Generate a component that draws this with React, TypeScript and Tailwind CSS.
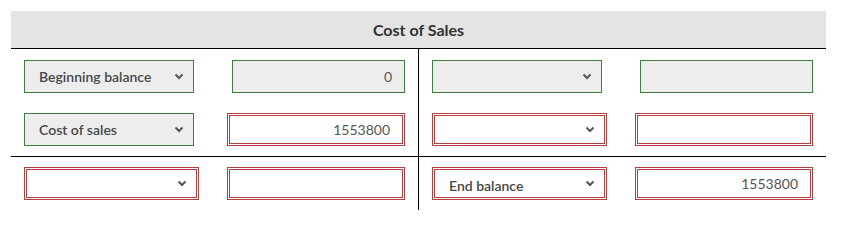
import React from 'react';

type Tone = 'ok' | 'bad';

interface CellProps {
  tone: Tone;
  value?: string;
  low?: boolean;
}

const Chevron = () => (
  <svg width="10" height="7" viewBox="0 0 10 7" className="shrink-0">
    <path d="M1.5 1.5 L5 5 L8.5 1.5" fill="none" stroke="#555" strokeWidth="2" />
  </svg>
);

// red boxes are drawn as two thin frames with a white gap between
const Frame: React.FC<{ tone: Tone; width: string; children: React.ReactNode }> = ({ tone, width, children }) => {
  if (tone === 'ok') {
    return <div className={`h-[33px] ${width} border border-[#3d7f3a] bg-[#ededed] flex`}>{children}</div>;
  }
  return (
    <div className={`h-[33px] ${width} border border-[#b3403d] bg-white p-px flex`}>
      <div className="flex-1 border border-[#b3403d] flex">{children}</div>
    </div>
  );
};

// dropdown account cell
const SelectCell: React.FC<CellProps> = ({ tone, value, low }) => (
  <Frame tone={tone} width={tone === 'ok' ? 'w-[170px]' : 'w-[175px]'}>
    <div className="flex-1 flex items-center justify-between pl-[14px] pr-[9px]">
      <span className={`text-[14px] font-semibold text-[#474747] ${low ? 'pt-[4px]' : ''}`}>{value ?? ''}</span>
      <Chevron />
    </div>
  </Frame>
);

// amount cell
const InputCell: React.FC<CellProps> = ({ tone, value }) => (
  <Frame tone={tone} width={tone === 'ok' ? 'w-[173px]' : 'w-[178px]'}>
    <div className="flex-1 flex items-center justify-end pr-[12px]">
      <span className="text-[14px] text-[#555]">{value ?? ''}</span>
    </div>
  </Frame>
);

const Side: React.FC<{ children: React.ReactNode }> = ({ children }) => (
  <div className="w-[407px] flex items-center justify-between px-[13px]">{children}</div>
);

export default function App() {
  return (
    <div className="w-[862px] h-[242px] bg-white pt-[11px] pl-[11px]" style={{ fontFamily: 'Lato, "Open Sans", sans-serif' }}>
      <div className="w-[815px]">
        <div className="h-[38px] bg-[#e4e4e4] border-b border-black flex items-center justify-center">
          <span className="text-[16px] font-bold text-[#333]">Cost of Sales</span>
        </div>

        <div className="flex">
          <div className="border-r border-black pt-[11px] pb-[10px] flex flex-col gap-[20px]">
            <Side>
              <SelectCell tone="ok" value="Beginning balance" />
              <InputCell tone="ok" value="0" />
            </Side>
            <Side>
              <SelectCell tone="ok" value="Cost of sales" />
              <InputCell tone="bad" value="1553800" />
            </Side>
          </div>
          <div className="pt-[11px] pb-[10px] flex flex-col gap-[20px]">
            <Side>
              <SelectCell tone="ok" />
              <InputCell tone="ok" />
            </Side>
            <Side>
              <SelectCell tone="bad" />
              <InputCell tone="bad" />
            </Side>
          </div>
        </div>

        <div className="flex border-t border-black">
          <div className="border-r border-black py-[10px]">
            <Side>
              <SelectCell tone="bad" />
              <InputCell tone="bad" />
            </Side>
          </div>
          <div className="py-[10px]">
            <Side>
              <SelectCell tone="bad" value="End balance" low />
              <InputCell tone="bad" value="1553800" />
            </Side>
          </div>
        </div>
      </div>
    </div>
  );
}
